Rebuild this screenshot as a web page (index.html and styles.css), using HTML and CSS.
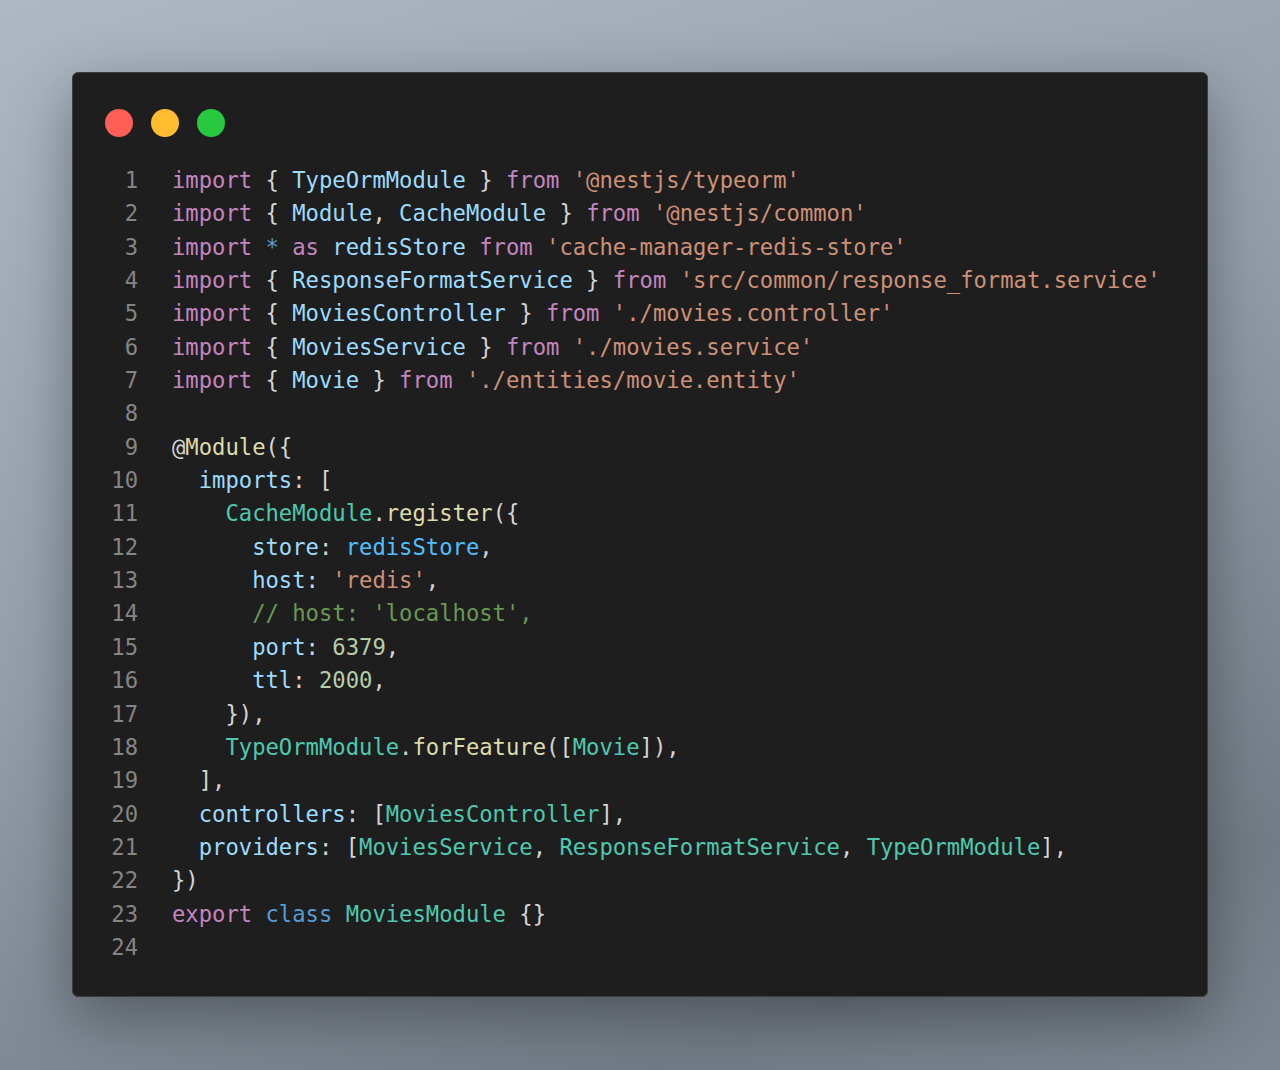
FILE: index.html
```html
<!DOCTYPE html>
<html>

<head>
    <title>movies.module.ts</title>
    <link rel="stylesheet" href="styles.css">
    <meta name="viewport" content="width=device-width, initial-scale=1">
</head>

<body>
    <div class="window">
        <div class="dots">
            <span class="dot red"></span>
            <span class="dot yellow"></span>
            <span class="dot green"></span>
        </div>
        <div class="editor">
            <div class="gutter"><div>1</div><div>2</div><div>3</div><div>4</div><div>5</div><div>6</div><div>7</div><div>8</div><div>9</div><div>10</div><div>11</div><div>12</div><div>13</div><div>14</div><div>15</div><div>16</div><div>17</div><div>18</div><div>19</div><div>20</div><div>21</div><div>22</div><div>23</div><div>24</div></div>
<pre class="code"><span class="kw">import</span> { <span class="var">TypeOrmModule</span> } <span class="kw">from</span> <span class="str">'@nestjs/typeorm'</span>
<span class="kw">import</span> { <span class="var">Module</span>, <span class="var">CacheModule</span> } <span class="kw">from</span> <span class="str">'@nestjs/common'</span>
<span class="kw">import</span> <span class="star">*</span> <span class="kw">as</span> <span class="var">redisStore</span> <span class="kw">from</span> <span class="str">'cache-manager-redis-store'</span>
<span class="kw">import</span> { <span class="var">ResponseFormatService</span> } <span class="kw">from</span> <span class="str">'src/common/response_format.service'</span>
<span class="kw">import</span> { <span class="var">MoviesController</span> } <span class="kw">from</span> <span class="str">'./movies.controller'</span>
<span class="kw">import</span> { <span class="var">MoviesService</span> } <span class="kw">from</span> <span class="str">'./movies.service'</span>
<span class="kw">import</span> { <span class="var">Movie</span> } <span class="kw">from</span> <span class="str">'./entities/movie.entity'</span>

@<span class="fn">Module</span>({
  <span class="var">imports</span>: [
    <span class="type">CacheModule</span>.<span class="fn">register</span>({
      <span class="var">store</span>: <span class="const">redisStore</span>,
      <span class="var">host</span>: <span class="str">'redis'</span>,
      <span class="cmt">// host: 'localhost',</span>
      <span class="var">port</span>: <span class="num">6379</span>,
      <span class="var">ttl</span>: <span class="num">2000</span>,
    }),
    <span class="type">TypeOrmModule</span>.<span class="fn">forFeature</span>([<span class="type">Movie</span>]),
  ],
  <span class="var">controllers</span>: [<span class="type">MoviesController</span>],
  <span class="var">providers</span>: [<span class="type">MoviesService</span>, <span class="type">ResponseFormatService</span>, <span class="type">TypeOrmModule</span>],
})
<span class="kw">export</span> <span class="cls">class</span> <span class="type">MoviesModule</span> {}
</pre>
        </div>
    </div>
</body>

</html>
```

FILE: styles.css
```css
html {
    height: 100%;
}

body {
    margin: 0;
    min-height: 100%;
    padding: 72px;
    box-sizing: border-box;
    background: linear-gradient(160deg, #adb8c3 0%, #939ea9 45%, #737c86 85%, #7c8690 100%);
}

.window {
    width: 1136px;
    height: 925px;
    box-sizing: border-box;
    background: #1e1e1e;
    border: 1px solid #3a3d41;
    border-radius: 6px;
    padding: 36px 32px 0 32px;
    box-shadow: 0 20px 60px rgba(0, 0, 0, 0.35);
}

.dots {
    display: flex;
    gap: 18px;
}

.dot {
    width: 28px;
    height: 28px;
    border-radius: 50%;
}

.red {
    background: #ff5f57;
}

.yellow {
    background: #febc2e;
}

.green {
    background: #28c840;
}

.editor {
    display: flex;
    margin-top: 27px;
    font-family: "DejaVu Sans Mono", "Liberation Mono", monospace;
    font-size: 22.2px;
    line-height: 33.35px;
}

.gutter {
    width: 33px;
    text-align: right;
    color: #858585;
}

.code {
    margin: 0 0 0 34px;
    font: inherit;
    color: #d4d4d4;
}

.kw {
    color: #c586c0;
}

.var {
    color: #9cdcfe;
}

.str {
    color: #ce9178;
}

.fn {
    color: #dcdcaa;
}

.type {
    color: #4ec9b0;
}

.const {
    color: #4fc1ff;
}

.star {
    color: #569cd6;
}

.cls {
    color: #569cd6;
}

.num {
    color: #b5cea8;
}

.cmt {
    color: #6a9955;
}
```
